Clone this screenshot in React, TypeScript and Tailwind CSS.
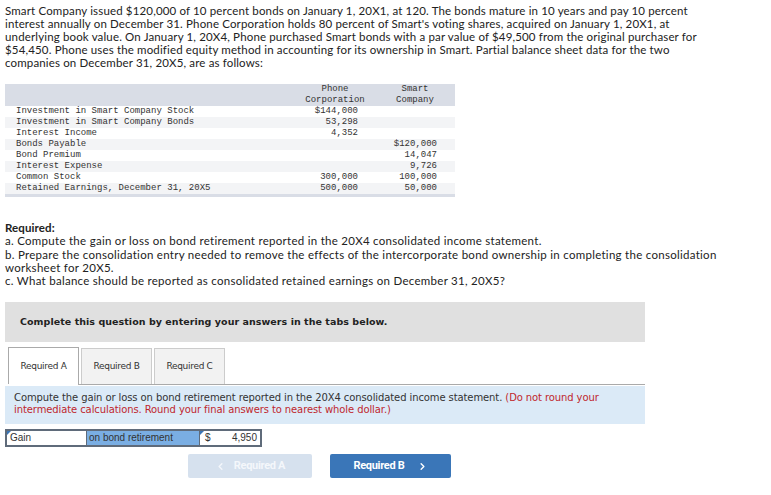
import { ChevronLeft, ChevronRight } from "lucide-react";

const rows = [
  ["Investment in Smart Company Stock", "$144,000", ""],
  ["Investment in Smart Company Bonds", "53,298", ""],
  ["Interest Income", "4,352", ""],
  ["Bonds Payable", "", "$120,000"],
  ["Bond Premium", "", "14,047"],
  ["Interest Expense", "", "9,726"],
  ["Common Stock", "300,000", "100,000"],
  ["Retained Earnings, December 31, 20X5", "500,000", "50,000"],
];

export default function App() {
  return (
    <div className="w-[771px] h-[495px] bg-white text-[#222] pl-[5px] pt-[4px] font-['Lato',sans-serif] overflow-hidden">
      <p className="text-[11.5px] leading-[13px] tracking-[0.15px]">
        Smart Company issued $120,000 of 10 percent bonds on January 1, 20X1, at 120. The bonds mature in 10 years and pay 10 percent
        <br />
        interest annually on December 31. Phone Corporation holds 80 percent of Smart's voting shares, acquired on January 1, 20X1, at
        <br />
        underlying book value. On January 1, 20X4, Phone purchased Smart bonds with a par value of $49,500 from the original purchaser for
        <br />
        $54,450. Phone uses the modified equity method in accounting for its ownership in Smart. Partial balance sheet data for the two
        <br />
        companies on December 31, 20X5, are as follows:
      </p>

      <div className="mt-[15px] w-[450px] border-b-[3px] border-[#d9dde6] font-['Liberation_Mono',monospace] text-[9px] leading-[11px] text-[#333]">
        <div className="flex bg-[#d9dde6] h-[22px] items-end">
          <div className="flex-1" />
          <div className="w-[80px] text-center">Phone<br />Corporation</div>
          <div className="w-[80px] text-center">Smart<br />Company</div>
        </div>
        {rows.map((r, i) => (
          <div key={r[0]} className={`flex h-[11px] ${i % 2 === 1 ? "bg-[#f3f4f6]" : "bg-white"}`}>
            <div className="flex-1 pl-[11px] whitespace-pre">{r[0]}</div>
            <div className="w-[80px] text-right pr-[17px]">{r[1]}</div>
            <div className="w-[80px] text-right pr-[18px]">{r[2]}</div>
          </div>
        ))}
      </div>

      <div className="mt-[24px] text-[11.5px] leading-[13.3px] tracking-[0.28px]">
        <p className="font-bold tracking-[0.1px]">Required:</p>
        <p>a. Compute the gain or loss on bond retirement reported in the 20X4 consolidated income statement.</p>
        <p>
          b. Prepare the consolidation entry needed to remove the effects of the intercorporate bond ownership in completing the consolidation
          <br />
          worksheet for 20X5.
        </p>
        <p>c. What balance should be reported as consolidated retained earnings on December 31, 20X5?</p>
      </div>

      <div className="mt-[15px] w-[640px] h-[40px] bg-[#e0e0e0] flex items-center pl-[15px] font-['DejaVu_Sans',sans-serif] text-[9.5px] font-bold tracking-[0.05px] text-[#222]">
        Complete this question by entering your answers in the tabs below.
      </div>

      <div className="mt-[5px] w-[640px] font-['DejaVu_Sans',sans-serif] text-[9px] tracking-[-0.3px] text-[#333]">
        <div className="flex items-end h-[37px] pl-[3px] gap-[2px]">
          <div className="w-[71px] h-[37px] bg-white border border-b-0 border-[#aaa] flex items-center justify-center">Required A</div>
          <div className="w-[71px] h-[36px] bg-[#f2f2f2] border border-b-0 border-[#ccc] flex items-center justify-center">Required B</div>
          <div className="w-[71px] h-[36px] bg-[#f2f2f2] border border-b-0 border-[#ccc] flex items-center justify-center">Required C</div>
        </div>
        <div className="ml-[73px] h-px bg-[#aaa]" />
        <div className="mt-px h-[38px] bg-[#dbeaf7] pl-[9px] pt-[6px] text-[10px] leading-[12px] tracking-[-0.1px]">
          Compute the gain or loss on bond retirement reported in the 20X4 consolidated income statement.{" "}
          <span className="text-[#c0272d]">(Do not round your</span>
          <br />
          <span className="text-[#c0272d]">intermediate calculations. Round your final answers to nearest whole dollar.)</span>
        </div>
      </div>

      <div className="mt-[5px] flex w-[257px] h-[18px] border-2 border-[#5f6b7a] bg-[#5f6b7a] gap-px font-['Liberation_Sans',sans-serif] text-[10px] text-[#333]">
        <div className="relative w-[79px] bg-white pl-[3px] leading-[14px]">
          <span className="absolute left-0 top-0 w-0 h-0 border-t-[4px] border-r-[4px] border-t-[#3a76b8] border-r-transparent" />
          Gain
        </div>
        <div className="w-[112px] bg-[#7aaee3] pl-[2px] leading-[14px]">on bond retirement</div>
        <div className="relative flex-1 bg-white flex justify-between pl-[5px] pr-[3px] leading-[14px]">
          <span className="absolute left-0 top-0 w-0 h-0 border-t-[4px] border-r-[4px] border-t-[#3a76b8] border-r-transparent" />
          <span>$</span>
          <span>4,950</span>
        </div>
      </div>

      <div className="mt-[7px] flex gap-[18px] pl-[183px] font-['Roboto',sans-serif] text-[11px] font-bold tracking-[-0.3px] text-white">
        <div className="w-[124px] h-[24px] bg-[#d6e1ee] rounded-[2px] flex items-center justify-center gap-[8px] text-[#f4f7fb]">
          <ChevronLeft size={11} strokeWidth={3} />
          Required A
        </div>
        <div className="w-[121px] h-[24px] bg-[#3a76b8] rounded-[2px] flex items-center justify-center gap-[12px]">
          Required B
          <ChevronRight size={11} strokeWidth={3} />
        </div>
      </div>
    </div>
  );
}
